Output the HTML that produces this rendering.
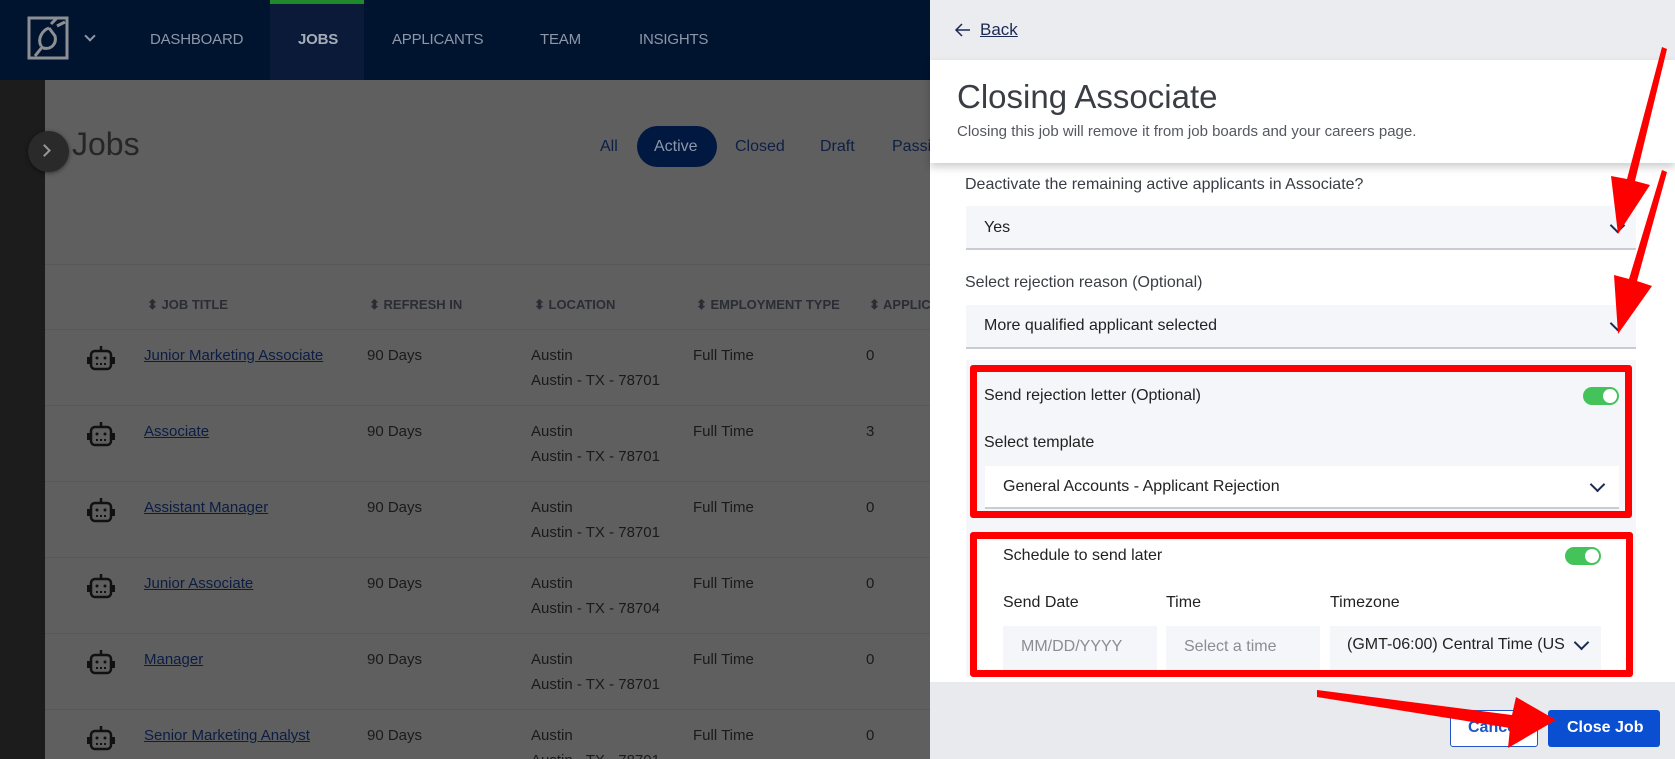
<!DOCTYPE html>
<html style="width:1675px;height:759px;overflow:hidden;background:#5f5f5f"><head><meta charset="utf-8"><style>
*{margin:0;padding:0;box-sizing:border-box}
body{width:1675px;height:759px;overflow:hidden;position:relative;font-family:"Liberation Sans",sans-serif;background:#5f5f5f}
.a{position:absolute;white-space:nowrap}
.nav{left:0;top:0;width:930px;height:80px;background:#00142f}
.navt{top:31px;font-size:15px;color:#8e97a8;letter-spacing:-0.2px}
.td{font-size:15px;color:#1a1a1a}
.lk{font-size:15px;color:#0b1d45;text-decoration:underline}
.hd{font-size:13px;font-weight:bold;color:#2a2d33;top:297px}
.sep{left:45px;width:885px;height:1px;background:#575757}
.panel{left:930px;top:0;width:745px;height:759px;background:#fff}
.lbl{font-size:16px;color:#3a3d44}
.fld{background:#f5f6fa;border-bottom:2px solid #c9ccd2}
.chev{width:11px;height:11px;border-right:2px solid #1b2a52;border-bottom:2px solid #1b2a52;transform:rotate(45deg)}
.tog{width:36px;height:18px;border-radius:9px;background:#43c35a}
.tog:after{content:"";position:absolute;right:2px;top:2px;width:14px;height:14px;border-radius:50%;background:#fff}
.red{border:7px solid #f00;border-radius:3px}
</style></head><body>
<div class="a" style="left:0;top:80px;width:45px;height:679px;background:#1c1c1c"></div>
<div class="a nav"></div>
<div class="a" style="left:270px;top:0;width:94px;height:80px;background:#0b1a38"></div>
<div class="a" style="left:270px;top:0;width:94px;height:4px;background:#1e8a2c"></div>
<svg class="a" style="left:27px;top:16px" width="44" height="46" viewBox="0 0 44 46"><rect x="2" y="2" width="38" height="40" fill="none" stroke="#8d8f94" stroke-width="3"/><path d="M8 40 L16 30 M14 30 C10 22 16 14 22 12 M22 12 L28 20 C30 28 24 34 16 32 M24 8 L30 2 M30 10 L38 6" fill="none" stroke="#8d8f94" stroke-width="3"/></svg>
<div class="a" style="left:86px;top:32px;width:8px;height:8px;border-right:2px solid #8d97a8;border-bottom:2px solid #8d97a8;transform:rotate(45deg)"></div>
<div class="a navt" style="left:150px">DASHBOARD</div>
<div class="a navt" style="left:298px;font-weight:bold;color:#a6adb9">JOBS</div>
<div class="a navt" style="left:392px">APPLICANTS</div>
<div class="a navt" style="left:540px">TEAM</div>
<div class="a navt" style="left:639px">INSIGHTS</div>
<div class="a" style="left:28px;top:131px;width:41px;height:41px;border-radius:50%;background:#2a2a2a;box-shadow:0 1px 4px rgba(0,0,0,.5)"></div>
<div class="a" style="left:40px;top:146px;width:9px;height:9px;border-right:2px solid #999;border-top:2px solid #999;transform:rotate(45deg)"></div>
<div class="a" style="left:72px;top:126px;font-size:32px;color:#262626">Jobs</div>
<div class="a" style="left:600px;top:138px;font-size:16px;color:#0e1f44">All</div>
<div class="a" style="left:637px;top:126px;width:80px;height:41px;border-radius:21px;background:#011840"></div>
<div class="a" style="left:654px;top:138px;font-size:16px;color:#8d97aa">Active</div>
<div class="a" style="left:735px;top:138px;font-size:16px;color:#0e1f44">Closed</div>
<div class="a" style="left:820px;top:138px;font-size:16px;color:#0e1f44">Draft</div>
<div class="a" style="left:892px;top:138px;font-size:16px;color:#0e1f44">Passi</div>
<div class="a sep" style="top:264px"></div>
<div class="a hd" style="left:147px">⬍ JOB TITLE</div>
<div class="a hd" style="left:369px">⬍ REFRESH IN</div>
<div class="a hd" style="left:534px">⬍ LOCATION</div>
<div class="a hd" style="left:696px">⬍ EMPLOYMENT TYPE</div>
<div class="a hd" style="left:869px">⬍ APPLIC</div>
<div class="a sep" style="top:329px"></div>

<div id="rows"></div>
<script>
var r=[["Junior Marketing Associate","0","78701"],["Associate","3","78701"],["Assistant Manager","0","78701"],["Junior Associate","0","78704"],["Manager","0","78701"],["Senior Marketing Analyst","0","78701"]];
var h="";
r.forEach(function(x,i){var y=347+i*76;
h+='<svg class="a" style="left:86px;top:'+(y-2)+'px" width="30" height="28" viewBox="0 0 30 28"><line x1="15" y1="1" x2="15" y2="6" stroke="#111" stroke-width="2.5"/><rect x="5" y="6" width="20" height="18" rx="4" fill="none" stroke="#111" stroke-width="2.5"/><rect x="1" y="12" width="3" height="7" fill="#111"/><rect x="26" y="12" width="3" height="7" fill="#111"/><circle cx="11" cy="13" r="1.5" fill="#111"/><circle cx="19" cy="13" r="1.5" fill="#111"/><rect x="10" y="18" width="2" height="2" fill="#111"/><rect x="14" y="18" width="2" height="2" fill="#111"/><rect x="18" y="18" width="2" height="2" fill="#111"/></svg>';
h+='<div class="a lk" style="left:144px;top:'+y+'px">'+x[0]+'</div>';
h+='<div class="a td" style="left:367px;top:'+y+'px">90 Days</div>';
h+='<div class="a td" style="left:531px;top:'+y+'px">Austin</div>';
h+='<div class="a td" style="left:531px;top:'+(y+25)+'px">Austin - TX - '+x[2]+'</div>';
h+='<div class="a td" style="left:693px;top:'+y+'px">Full Time</div>';
h+='<div class="a td" style="left:866px;top:'+y+'px">'+x[1]+'</div>';
h+='<div class="a sep" style="top:'+(y+58)+'px"></div>';});
document.getElementById("rows").innerHTML=h;
</script>

<div class="a panel"></div>
<div class="a" style="left:930px;top:0;width:745px;height:60px;background:#ebecf0"></div>
<svg class="a" style="left:954px;top:21px" width="18" height="18" viewBox="0 0 18 18"><path d="M16 9H2M8 3L2 9l6 6" fill="none" stroke="#1b2a52" stroke-width="1.5"/></svg>
<div class="a" style="left:980px;top:20px;font-size:17px;color:#1b2a52;text-decoration:underline">Back</div>
<div class="a" style="left:930px;top:60px;width:745px;height:103px;background:#fff;box-shadow:0 4px 8px rgba(0,0,0,.2)"></div>
<div class="a" style="left:957px;top:78px;font-size:33px;color:#3a3d44;font-weight:300">Closing Associate</div>
<div class="a" style="left:957px;top:123px;font-size:15px;color:#55585f">Closing this job will remove it from job boards and your careers page.</div>

<div class="a lbl" style="left:965px;top:176px">Deactivate the remaining active applicants in Associate?</div>
<div class="a fld" style="left:966px;top:206px;width:670px;height:44px"></div>
<div class="a lbl" style="left:984px;top:219px;color:#222">Yes</div>
<div class="a chev" style="left:1612px;top:220px"></div>
<div class="a lbl" style="left:965px;top:274px">Select rejection reason (Optional)</div>
<div class="a fld" style="left:966px;top:305px;width:670px;height:44px"></div>
<div class="a lbl" style="left:984px;top:317px;color:#222">More qualified applicant selected</div>
<div class="a chev" style="left:1612px;top:318px"></div>

<div class="a" style="left:966px;top:360px;width:670px;height:317px;background:#f5f6fa"></div>
<div class="a red" style="left:970px;top:365px;width:662px;height:153px"></div>
<div class="a lbl" style="left:984px;top:387px;color:#222">Send rejection letter (Optional)</div>
<div class="a tog" style="left:1583px;top:387px"></div>
<div class="a lbl" style="left:984px;top:434px;color:#222">Select template</div>
<div class="a" style="left:985px;top:466px;width:634px;height:43px;background:#fff;border-bottom:2px solid #c9ccd2"></div>
<div class="a lbl" style="left:1003px;top:478px;color:#222">General Accounts - Applicant Rejection</div>
<div class="a chev" style="left:1592px;top:479px"></div>

<div class="a" style="left:970px;top:532px;width:663px;height:145px;background:#fff"></div>
<div class="a lbl" style="left:1003px;top:547px;color:#222">Schedule to send later</div>
<div class="a tog" style="left:1565px;top:547px"></div>
<div class="a lbl" style="left:1003px;top:594px;color:#222">Send Date</div>
<div class="a lbl" style="left:1166px;top:594px;color:#222">Time</div>
<div class="a lbl" style="left:1330px;top:594px;color:#222">Timezone</div>
<div class="a" style="left:1003px;top:626px;width:154px;height:45px;background:#f5f6fa"></div>
<div class="a" style="left:1166px;top:626px;width:154px;height:45px;background:#f5f6fa"></div>
<div class="a" style="left:1330px;top:626px;width:271px;height:45px;background:#f5f6fa"></div>
<div class="a lbl" style="left:1021px;top:638px;color:#8a8d93;width:122px;overflow:hidden">MM/DD/YYYY</div>
<div class="a lbl" style="left:1184px;top:638px;color:#8a8d93">Select a time</div>
<div class="a lbl" style="left:1347px;top:636px;color:#222">(GMT-06:00) Central Time (US</div>
<div class="a chev" style="left:1576px;top:637px"></div>
<div class="a red" style="left:970px;top:532px;width:663px;height:145px;z-index:2"></div>

<div class="a" style="left:930px;top:682px;width:745px;height:77px;background:#e9eaee"></div>
<div class="a" style="left:1450px;top:710px;width:88px;height:37px;background:#fff;border:1.5px solid #1f56c7;border-radius:3px"></div>
<div class="a" style="left:1468px;top:719px;font-size:16px;font-weight:bold;color:#1f56c7">Cancel</div>
<div class="a" style="left:1548px;top:710px;width:112px;height:37px;background:#0a4fd1;border-radius:3px"></div>
<div class="a" style="left:1567px;top:719px;font-size:16px;font-weight:bold;color:#fff">Close Job</div>

<svg class="a" style="left:0;top:0;z-index:5" width="1675" height="759">
<polygon points="1662,47 1667,49 1635,181 1650,185 1618,234 1611,176 1627,179" fill="#f00"/>
<polygon points="1662,170 1667,172 1637,281 1652,286 1618,334 1614,275 1629,279" fill="#f00"/>
<polygon points="1317,690 1317,697 1510,728 1508,748 1556,720 1516,697 1512,715" fill="#f00"/>
</svg>
</body></html>
